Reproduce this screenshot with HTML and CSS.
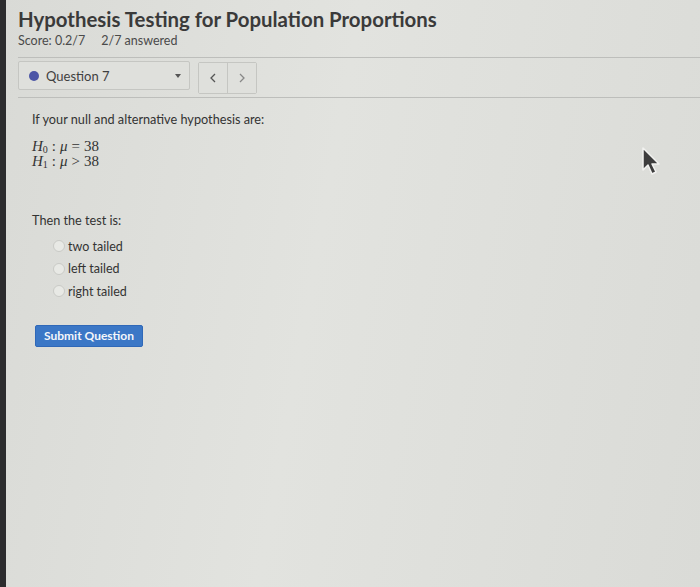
FILE: index.html
```html
<!DOCTYPE html>
<html>
<head>
<meta charset="utf-8">
<link rel="stylesheet" href="styles.css">
</head>
<body>
<div class="screen">
  <div class="edge"></div>
  <div class="page">
    <div class="header">
      <h1 class="title">Hypothesis Testing for Population Proportions</h1>
      <div class="score"><span>Score: 0.2/7</span><span class="answered">2/7 answered</span></div>
    </div>
    <div class="navbar">
      <div class="select">
        <span class="dot"></span>
        <span class="qlabel">Question 7</span>
        <span class="caret"></span>
      </div>
      <div class="btngroup">
        <div class="navbtn"><svg width="8" height="10" viewBox="0 0 8 10"><path d="M6 1 L2 5 L6 9" fill="none" stroke="#555" stroke-width="1.3"/></svg></div>
        <div class="navbtn"><svg width="8" height="10" viewBox="0 0 8 10"><path d="M2 1 L6 5 L2 9" fill="none" stroke="#888" stroke-width="1.3"/></svg></div>
      </div>
    </div>
    <div class="question">
      <p class="prompt">If your null and alternative hypothesis are:</p>
      <div class="math">
        <div class="mrow"><i>H</i><sub>0</sub><span class="op">:</span><i>&mu;</i><span class="op">=</span>38</div>
        <div class="mrow"><i>H</i><sub>1</sub><span class="op">:</span><i>&mu;</i><span class="op">&gt;</span>38</div>
      </div>
      <p class="prompt then">Then the test is:</p>
      <ul class="choices">
        <li><span class="radio"></span>two tailed</li>
        <li><span class="radio"></span>left tailed</li>
        <li><span class="radio"></span>right tailed</li>
      </ul>
      <button class="submit">Submit Question</button>
    </div>
  </div>
  <svg class="cursor" width="22" height="30" viewBox="0 0 22 30">
    <path d="M2 2 L2 24 L7 19 L11 28 L15 26 L11 18 L18 18 Z" fill="#3d3d3d" stroke="#f2f2f0" stroke-width="1.5" stroke-linejoin="round"/>
  </svg>
</div>
</body>
</html>
```
FILE: styles.css
```css
html, body {
  margin: 0;
  padding: 0;
}
body {
  width: 700px;
  height: 587px;
  overflow: hidden;
  background: #dcddd9;
  font-family: Lato, "Open Sans", sans-serif;
  color: #3b3b3b;
}
.screen {
  position: relative;
  display: flex;
  width: 700px;
  height: 587px;
  background: linear-gradient(100deg, #d9dad6 0%, #e2e3df 45%, #dadbd7 100%);
}
.edge {
  width: 6px;
  flex: none;
  background: #2c2c2e;
}
.page {
  flex: 1;
  padding-left: 12px;
}
.header {
  padding-top: 5px;
  height: 52px;
  border-bottom: 1px solid #bdbebb;
  margin-right: -10px;
}
.title {
  margin: 0;
  font-size: 20.4px;
  font-weight: 700;
  line-height: 28px;
  color: #3a3a3a;
}
.score {
  font-size: 12.5px;
  line-height: 16px;
  color: #4a4a4a;
}
.answered {
  margin-left: 16px;
}
.navbar {
  display: flex;
  align-items: flex-start;
  gap: 8px;
  padding-top: 3px;
  height: 36px;
  border-bottom: 1px solid #bdbebb;
  margin-right: -10px;
}
.select {
  display: flex;
  align-items: center;
  width: 160px;
  height: 27px;
  border: 1px solid #c5c6c2;
  border-radius: 2px;
  background: #dfe0dc;
  padding-left: 10px;
}
.dot {
  width: 10px;
  height: 10px;
  border-radius: 50%;
  background: #4c55a6;
  margin-right: 7px;
}
.qlabel {
  font-size: 13px;
  color: #3f3f3f;
  flex: 1;
}
.caret {
  width: 0;
  height: 0;
  border-left: 3px solid transparent;
  border-right: 3px solid transparent;
  border-top: 4px solid #555;
  margin-right: 8px;
}
.btngroup {
  display: flex;
  border: 1px solid #c5c6c2;
  border-radius: 2px;
  margin-top: 1px;
}
.navbtn {
  width: 28px;
  height: 30px;
  display: flex;
  align-items: center;
  justify-content: center;
  background: #dfe0dc;
}
.navbtn + .navbtn {
  border-left: 1px solid #c5c6c2;
}
.question {
  padding-left: 14px;
  padding-top: 12px;
}
.prompt {
  margin: 0;
  font-size: 12.7px;
  line-height: 18px;
  color: #333;
}
.math {
  margin-top: 11px;
  font-family: "Liberation Serif", "DejaVu Serif", serif;
  font-size: 15px;
  color: #333;
}
.mrow {
  height: 15px;
  line-height: 15px;
  overflow: visible;
}
.math sub {
  font-size: 10px;
  vertical-align: -2px;
  line-height: 0;
}
.op {
  margin: 0 4px;
}
.then {
  margin-top: 42px;
}
.choices {
  list-style: none;
  margin: 6px 0 0 0;
  padding: 0 0 0 21px;
}
.choices li {
  display: flex;
  align-items: center;
  height: 22.5px;
  font-size: 12.5px;
  color: #333;
}
.radio {
  width: 10px;
  height: 10px;
  border: 1px solid #c9cac6;
  border-radius: 50%;
  background: #e8e9e5;
  margin-right: 3px;
}
.submit {
  margin-top: 22px;
  margin-left: 3px;
  height: 22px;
  padding: 0 8px;
  border: 1px solid #2f68b8;
  border-radius: 2px;
  background: #3b77c6;
  color: #f4f6fa;
  font-family: Lato, "Open Sans", sans-serif;
  font-weight: 700;
  font-size: 12px;
}
.cursor {
  position: absolute;
  left: 641px;
  top: 146px;
}
```
